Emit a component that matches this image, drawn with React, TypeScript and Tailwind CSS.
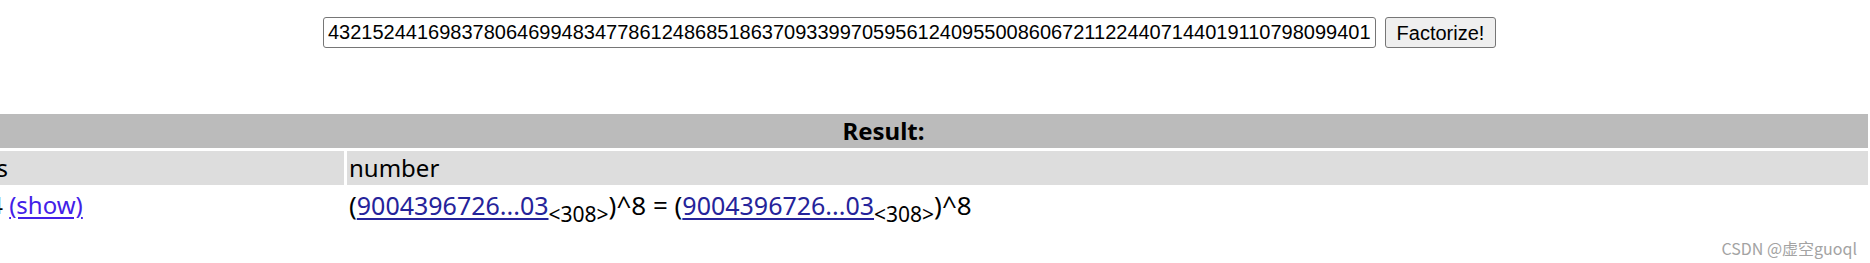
import React from 'react';

const NUMBER =
  '4321524416983780646994834778612486851863709339970595612409550086067211224407144019110798099401';

function FactorLink() {
  return (
    <>
      <a href="#" className="text-[25px] text-[#25239a] underline underline-offset-[3px]">
        9004396726...03
      </a>
      <span className="relative top-[7px] text-[21px] leading-none">&lt;308&gt;</span>
    </>
  );
}

export default function App() {
  return (
    <div className="relative h-[263px] w-[1870px] overflow-hidden bg-white font-['Noto_Sans',sans-serif] text-black">
      {/* Search form */}
      <div className="flex gap-[9px] pl-[323px] pt-[17px] font-['Liberation_Sans',Arial,sans-serif] text-[20px]">
        <input
          readOnly
          defaultValue={NUMBER}
          className="h-[31px] w-[1053px] rounded-[3px] border border-[#767676] bg-white pl-[4px] pr-[2px] text-[20px] text-black outline-none"
        />
        <button className="h-[31px] w-[111px] rounded-[3px] border border-[#767676] bg-[#efefef] text-[20px] text-black">
          Factorize!
        </button>
      </div>

      {/* Result table */}
      <div className="ml-[-101px] mt-[66px] w-[1969px] text-[24px]">
        <div className="flex h-[34px] items-center justify-center bg-[#bbbbbb] font-bold leading-[34px]">
          Result:
        </div>
        <div className="mt-[3px] grid h-[34px] grid-cols-[42px_400px_1521px] gap-x-[3px] leading-[34px]">
          <div className="bg-[#dddddd] pl-[2px]">status</div>
          <div className="bg-[#dddddd] pl-[2px]">digits</div>
          <div className="bg-[#dddddd] pl-[2px]">number</div>
        </div>
        <div className="mt-[3px] grid h-[34px] grid-cols-[42px_400px_1521px] gap-x-[3px] leading-[34px]">
          <div className="pl-[2px]">FF</div>
          <div className="whitespace-nowrap pl-[4px]">
            2464{' '}
            <a href="#" className="text-[#4320e8] underline underline-offset-[3px]">
              (show)
            </a>
          </div>
          <div className="whitespace-nowrap pl-[2px] text-[26px]">
            (<FactorLink />)^8 = (<FactorLink />)^8
          </div>
        </div>
      </div>

      {/* Watermark */}
      <div className="absolute right-[13px] top-[236px] font-['Noto_Sans_CJK_SC',sans-serif] text-[16px] text-[#a3a3a3]">
        CSDN @虚空guoql
      </div>
    </div>
  );
}
